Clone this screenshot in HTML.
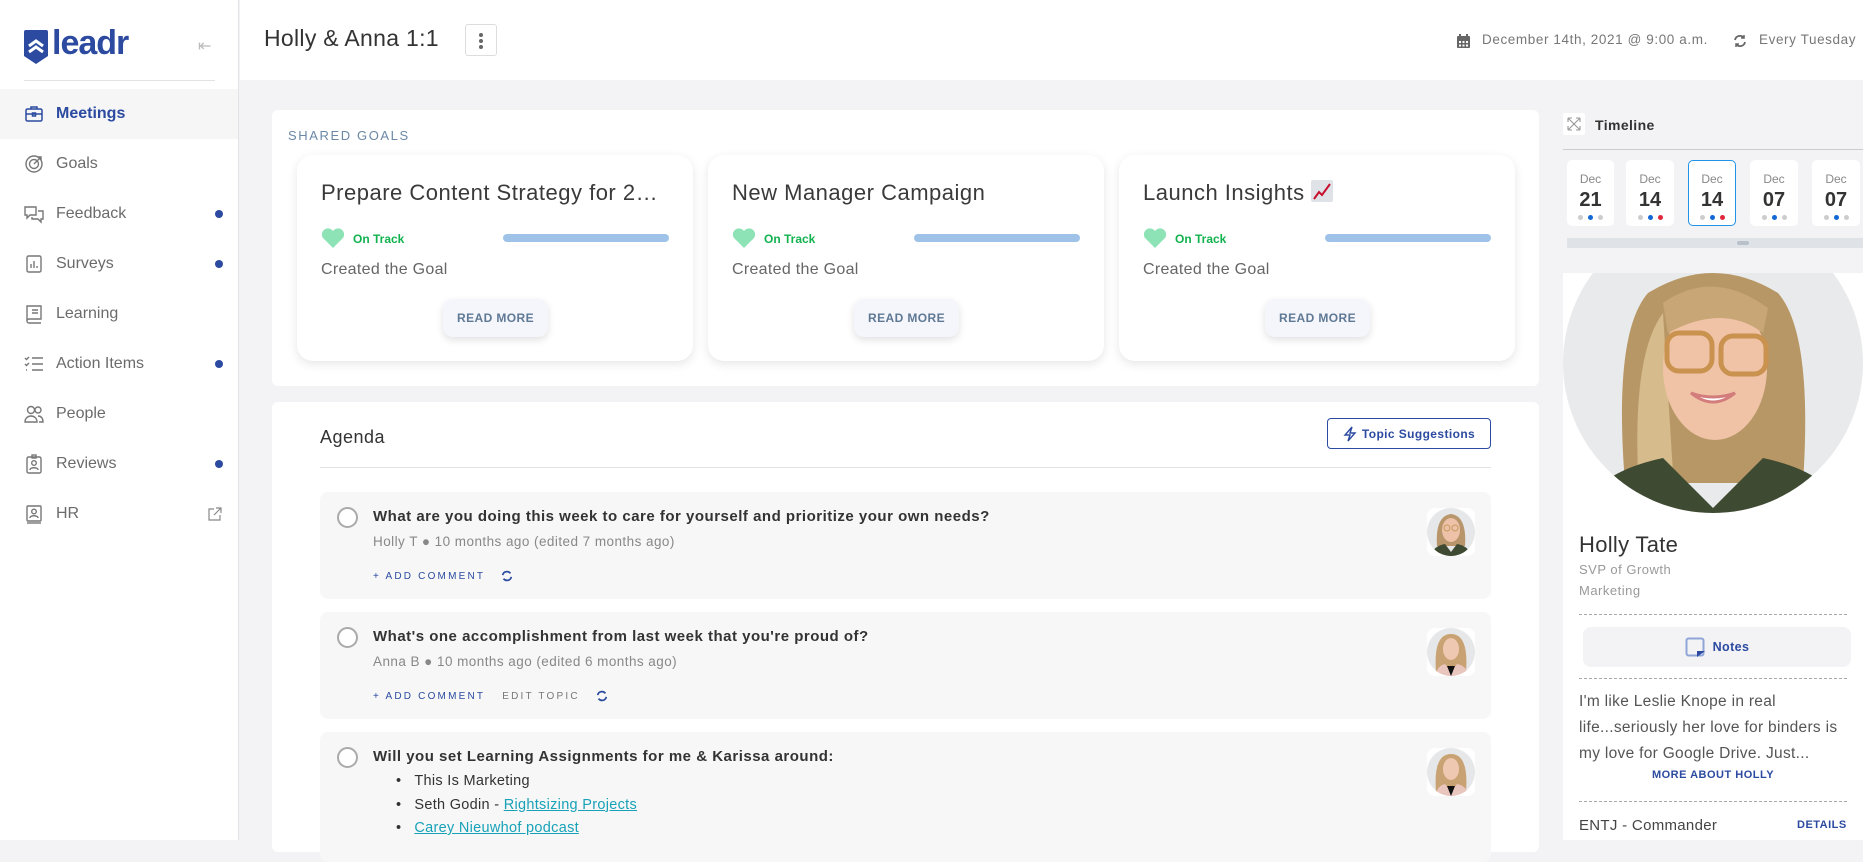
<!DOCTYPE html>
<html><head><meta charset="utf-8">
<style>
*{box-sizing:border-box;margin:0;padding:0}
body{width:1863px;height:840px;overflow:hidden;background:#f3f3f5;font-family:"Liberation Sans",sans-serif;position:relative;color:#333}
.a{position:absolute}
.side{left:0;top:0;width:239px;height:840px;background:#fff;border-right:1px solid #e3e3e6}
.nav{position:absolute;left:0;width:238px;height:50px;display:flex;align-items:center;padding-left:24px;font-size:16px;color:#6b6b6b}
.nav svg{width:20px;height:20px;margin-right:12px;flex:none}
.nav .dot{position:absolute;left:215px;width:8px;height:8px;border-radius:50%;background:#2b4aa0}
.hdr{left:240px;top:0;width:1623px;height:80px;background:#fff}
.panel{background:#fff;border-radius:6px}
.gc{position:absolute;top:155px;width:396px;height:206px;background:#fff;border-radius:16px;box-shadow:0 3px 10px rgba(0,0,0,.10)}
.gc .t{position:absolute;left:24px;top:25px;width:340px;font-size:22px;color:#3a3a3a;white-space:nowrap;overflow:hidden;text-overflow:ellipsis;letter-spacing:.5px}
.gc .h{position:absolute;left:24px;top:73px}
.gc .ot{position:absolute;left:56px;top:77px;font-size:12px;font-weight:bold;color:#12b24f}
.gc .bar{position:absolute;left:206px;top:79px;width:166px;height:8px;border-radius:4px;background:#9fc3e8}
.gc .cr{position:absolute;left:24px;top:106px;font-size:16px;color:#666;letter-spacing:.3px}
.gc .rm{position:absolute;left:146px;top:144px;width:105px;height:38px;border-radius:10px;background:#f5f6fb;box-shadow:0 3px 8px rgba(0,0,0,.12);font-size:12px;font-weight:bold;color:#5f7995;text-align:center;line-height:38px;letter-spacing:.4px}
.it{position:absolute;left:320px;width:1171px;background:#f7f7f7;border-radius:8px}
.it .c{position:absolute;left:17px;top:15px;width:21px;height:21px;border-radius:50%;border:2px solid #aaa;background:#fff}
.it .q{position:absolute;left:53px;top:16px;font-size:15px;font-weight:bold;color:#333;letter-spacing:.5px}
.it .m{position:absolute;left:53px;top:42px;font-size:13.5px;color:#888;letter-spacing:.45px}
.it .ac{position:absolute;left:53px;top:78px;font-size:10px;color:#2b4aa0;letter-spacing:2.2px;display:flex;align-items:center}
.it .av{position:absolute;left:1107px;top:16px;width:48px;height:48px;border-radius:8px;background:#fff;overflow:hidden}
.tc{position:absolute;top:160px;width:48px;height:66px;background:#fff;border-radius:5px;text-align:center}
.tc .mo{font-size:12px;color:#888;margin-top:12px}
.tc .d{font-size:20px;color:#333;margin-top:3px;font-weight:bold}
.tc .dots{margin-top:3px;display:flex;justify-content:center;gap:5px}
.tc .dots i{width:5px;height:5px;border-radius:50%;background:#ccc}
.dash{position:absolute;left:1579px;width:268px;border-top:1px dashed #aaa}
</style></head><body>

<div class="a side">
  <svg class="a" style="left:24px;top:30px" width="24" height="34" viewBox="0 0 24 34"><path d="M0 2Q0 0 2 0H22Q24 0 24 2V26L12 34L0 26Z" fill="#2b4aa0"/><path d="M5 16L12 11L19 16M5 22L12 17L19 22" stroke="#fff" stroke-width="3" fill="none"/></svg>
  <div class="a" style="left:52px;top:24px;font-size:34px;font-weight:bold;color:#2b4aa0;letter-spacing:-1px">leadr</div>
  <div class="a" style="left:198px;top:36px;font-size:16px;color:#bbb">&#8676;</div>
  <div class="a" style="left:24px;top:80px;width:191px;border-top:1px solid #e3e3e3"></div>

  <div class="nav" style="top:89px;background:#f6f6f7;color:#2b4aa0;font-weight:bold"><svg viewBox="0 0 20 20" fill="none" stroke="#2b4aa0" stroke-width="1.5"><rect x="2" y="5" width="16" height="12" rx="1.5"/><path d="M7 5V3h6v2M2 10h16"/><rect x="8.5" y="9" width="3" height="3"/></svg>Meetings</div>
  <div class="nav" style="top:139px"><svg viewBox="0 0 20 20" fill="none" stroke="#777" stroke-width="1.4"><circle cx="10" cy="10" r="8"/><circle cx="10" cy="10" r="4.5"/><path d="M10 10L17 3M14 3h3v3"/></svg>Goals</div>
  <div class="nav" style="top:189px"><svg viewBox="0 0 20 20" fill="none" stroke="#777" stroke-width="1.4"><path d="M1 3h11v8H6l-3 3v-3H1z"/><path d="M14 7h5v8h-2v3l-3-3H8v-2"/></svg>Feedback<span class="dot"></span></div>
  <div class="nav" style="top:239px"><svg viewBox="0 0 20 20" fill="none" stroke="#777" stroke-width="1.4"><rect x="3" y="2" width="14" height="16" rx="1.5"/><path d="M7 14V10M10 14V7M13 14v-2"/></svg>Surveys<span class="dot"></span></div>
  <div class="nav" style="top:289px"><svg viewBox="0 0 20 20" fill="none" stroke="#777" stroke-width="1.4"><path d="M3 17V2h14v13H5a2 2 0 000 4h12"/><path d="M8 6h6M8 9h6"/></svg>Learning</div>
  <div class="nav" style="top:339px"><svg viewBox="0 0 20 20" fill="none" stroke="#777" stroke-width="1.4"><path d="M1 4l1.5 1.5L5 3M1 10l1.5 1.5L5 9M2 16h1M8 4h11M8 10h11M8 16h11"/></svg>Action Items<span class="dot"></span></div>
  <div class="nav" style="top:389px"><svg viewBox="0 0 20 20" fill="none" stroke="#777" stroke-width="1.4"><circle cx="7" cy="6" r="3.5"/><circle cx="14" cy="6" r="3"/><path d="M1 18c0-4 3-6 6-6s6 2 6 6zM14 12c3 0 5 2 5 6h-4"/></svg>People</div>
  <div class="nav" style="top:439px"><svg viewBox="0 0 20 20" fill="none" stroke="#777" stroke-width="1.4"><rect x="3" y="3" width="14" height="16" rx="1.5"/><rect x="8" y="1" width="4" height="3"/><circle cx="10" cy="9" r="2.3"/><path d="M6 16c0-3 8-3 8 0"/></svg>Reviews<span class="dot"></span></div>
  <div class="nav" style="top:489px"><svg viewBox="0 0 20 20" fill="none" stroke="#777" stroke-width="1.4"><rect x="3" y="2" width="14" height="15" rx="1"/><path d="M3 19h14"/><circle cx="10" cy="7.5" r="2.3"/><path d="M6 14c0-3 8-3 8 0"/></svg>HR<svg style="position:absolute;left:207px;width:16px;height:16px" viewBox="0 0 16 16" fill="none" stroke="#888" stroke-width="1.2"><path d="M7 3H2v11h11V9M9 2h5v5M14 2L7 9"/></svg></div>
</div>

<div class="a hdr"></div>
<div class="a" style="left:264px;top:25px;font-size:23px;color:#333;letter-spacing:.3px">Holly &amp; Anna 1:1</div>
<div class="a" style="left:465px;top:24px;width:32px;height:32px;border:1px solid #ddd;border-radius:3px;background:#fff"><div style="position:absolute;left:13px;top:8px;width:4px;height:4px;border-radius:50%;background:#666;box-shadow:0 6px 0 #666,0 12px 0 #666"></div></div>
<svg class="a" style="left:1457px;top:34px" width="13" height="14" viewBox="0 0 13 14"><rect x="0" y="2" width="13" height="12" rx="1" fill="#666"/><rect x="2" y="0" width="2" height="3" fill="#666"/><rect x="9" y="0" width="2" height="3" fill="#666"/><g fill="#fff"><rect x="2" y="7" width="2" height="2"/><rect x="5.5" y="7" width="2" height="2"/><rect x="9" y="7" width="2" height="2"/><rect x="2" y="10.5" width="2" height="2"/><rect x="5.5" y="10.5" width="2" height="2"/><rect x="9" y="10.5" width="2" height="2"/></g></svg>
<div class="a" style="left:1482px;top:32px;font-size:13.5px;color:#777;letter-spacing:.6px">December 14th, 2021 @ 9:00 a.m.</div>
<svg class="a" style="left:1733px;top:34px" width="14" height="14" viewBox="0 0 14 14" fill="none" stroke="#666" stroke-width="1.8"><path d="M2 6a5 5 0 019-2M12 8a5 5 0 01-9 2"/><path d="M11 1v3H8M3 13v-3h3" stroke-width="1.5"/></svg>
<div class="a" style="left:1759px;top:32px;font-size:13.5px;color:#777;letter-spacing:.6px">Every Tuesday</div>

<!-- shared goals -->
<div class="a panel" style="left:272px;top:110px;width:1267px;height:276px"></div>
<div class="a" style="left:288px;top:128px;font-size:13px;color:#6b88a6;letter-spacing:1.6px">SHARED GOALS</div>

<div class="gc" style="left:297px"><div class="t">Prepare Content Strategy for 2022 Launch</div>
<svg class="h" width="24" height="20" viewBox="0 0 24 20"><path d="M12 20L2 10A6 6 0 0112 3A6 6 0 0122 10Z" fill="#8de3b6"/></svg>
<div class="ot">On Track</div><div class="bar"></div><div class="cr">Created the Goal</div><div class="rm">READ MORE</div></div>
<div class="gc" style="left:708px"><div class="t">New Manager Campaign</div>
<svg class="h" width="24" height="20" viewBox="0 0 24 20"><path d="M12 20L2 10A6 6 0 0112 3A6 6 0 0122 10Z" fill="#8de3b6"/></svg>
<div class="ot">On Track</div><div class="bar"></div><div class="cr">Created the Goal</div><div class="rm">READ MORE</div></div>
<div class="gc" style="left:1119px"><div class="t">Launch Insights <svg width="22" height="22" viewBox="0 0 22 22" style="vertical-align:-2px"><rect width="22" height="22" rx="2" fill="#dfe3e8"/><path d="M3 19L8 12L11 15L19 4" stroke="#c8102e" stroke-width="2" fill="none"/></svg></div>
<svg class="h" width="24" height="20" viewBox="0 0 24 20"><path d="M12 20L2 10A6 6 0 0112 3A6 6 0 0122 10Z" fill="#8de3b6"/></svg>
<div class="ot">On Track</div><div class="bar"></div><div class="cr">Created the Goal</div><div class="rm">READ MORE</div></div>

<!-- agenda -->
<div class="a panel" style="left:272px;top:402px;width:1267px;height:450px"></div>
<div class="a" style="left:320px;top:427px;font-size:18px;color:#333;letter-spacing:.5px">Agenda</div>
<div class="a" style="left:1327px;top:418px;width:164px;height:31px;border:1.5px solid #2b4aa0;border-radius:4px;font-size:12px;font-weight:bold;color:#2b4aa0;display:flex;align-items:center;justify-content:center;letter-spacing:.4px"><svg width="14" height="16" viewBox="0 0 14 16" fill="none" stroke="#2b4aa0" stroke-width="1.4" style="margin-right:5px"><path d="M9 1L2 9h5l-2 6 7-8H7z"/></svg>Topic Suggestions</div>
<div class="a" style="left:320px;top:467px;width:1171px;border-top:1px solid #e3e3e3"></div>

<div class="it" style="top:492px;height:107px"><div class="c"></div>
<div class="q">What are you doing this week to care for yourself and prioritize your own needs?</div>
<div class="m">Holly T &#9679; 10 months ago (edited 7 months ago)</div>
<div class="ac">+ ADD COMMENT<svg style="margin-left:16px" width="12" height="12" viewBox="0 0 14 14" fill="none" stroke="#2b4aa0" stroke-width="2"><path d="M2 6a5 5 0 019-2M12 8a5 5 0 01-9 2"/></svg></div>
<div class="av"><svg width="48" height="48" viewBox="0 0 48 48"><circle cx="24" cy="24" r="24" fill="#e6e7e8"/><clipPath id="c1"><circle cx="24" cy="24" r="24"/></clipPath><g clip-path="url(#c1)"><path d="M10 38Q8 8 24 6Q40 8 38 38Z" fill="#b8956a"/><ellipse cx="24" cy="22" rx="9" ry="12" fill="#edc2a8"/><path d="M4 48Q6 38 18 36L24 44L30 36Q42 38 44 48Z" fill="#3f4a32"/><circle cx="20" cy="20" r="3" fill="none" stroke="#c79a5e"/><circle cx="28" cy="20" r="3" fill="none" stroke="#c79a5e"/></g></svg></div></div>

<div class="it" style="top:612px;height:107px"><div class="c"></div>
<div class="q">What's one accomplishment from last week that you're proud of?</div>
<div class="m">Anna B &#9679; 10 months ago (edited 6 months ago)</div>
<div class="ac">+ ADD COMMENT<span style="margin-left:17px;color:#777">EDIT TOPIC</span><svg style="margin-left:16px" width="12" height="12" viewBox="0 0 14 14" fill="none" stroke="#2b4aa0" stroke-width="2"><path d="M2 6a5 5 0 019-2M12 8a5 5 0 01-9 2"/></svg></div>
<div class="av"><svg width="48" height="48" viewBox="0 0 48 48"><circle cx="24" cy="24" r="24" fill="#e6e7e8"/><clipPath id="c2"><circle cx="24" cy="24" r="24"/></clipPath><g clip-path="url(#c2)"><path d="M9 44Q6 6 24 6Q42 6 39 44Z" fill="#c9a273"/><ellipse cx="24" cy="21" rx="8" ry="11" fill="#efc8b2"/><path d="M8 48Q10 38 18 36L24 44L30 36Q40 38 42 48Z" fill="#e9c6bd"/><path d="M20 38L24 48L28 38Z" fill="#111"/></g></svg></div></div>

<div class="it" style="top:732px;height:130px"><div class="c"></div>
<div class="q">Will you set Learning Assignments for me &amp; Karissa around:</div>
<div class="a" style="left:76px;top:38px;font-size:14.5px;line-height:23.5px;color:#333;letter-spacing:.3px">
<div>&#8226;&nbsp;&nbsp;&nbsp;This Is Marketing</div>
<div>&#8226;&nbsp;&nbsp;&nbsp;Seth Godin - <u style="color:#17a2b8">Rightsizing Projects</u></div>
<div>&#8226;&nbsp;&nbsp;&nbsp;<u style="color:#17a2b8">Carey Nieuwhof podcast</u></div></div>
<div class="av"><svg width="48" height="48" viewBox="0 0 48 48"><circle cx="24" cy="24" r="24" fill="#e6e7e8"/><clipPath id="c3"><circle cx="24" cy="24" r="24"/></clipPath><g clip-path="url(#c3)"><path d="M9 44Q6 6 24 6Q42 6 39 44Z" fill="#c9a273"/><ellipse cx="24" cy="21" rx="8" ry="11" fill="#efc8b2"/><path d="M8 48Q10 38 18 36L24 44L30 36Q40 38 42 48Z" fill="#e9c6bd"/><path d="M20 38L24 48L28 38Z" fill="#111"/></g></svg></div></div>

<!-- timeline -->
<div class="a" style="left:1563px;top:113px;width:22px;height:22px;background:#fff;border-radius:2px"><svg width="22" height="22" viewBox="0 0 22 22" fill="none" stroke="#999" stroke-width="1.1"><path d="M5 5l12 12M17 5L5 17M5 5h4M5 5v4M17 5h-4M17 5v4M5 17h4M5 17v-4M17 17h-4M17 17v-4"/></svg></div>
<div class="a" style="left:1595px;top:117px;font-size:14px;color:#333;font-weight:bold;letter-spacing:.4px">Timeline</div>
<div class="a" style="left:1563px;top:149px;width:300px;border-top:1px solid #ccc"></div>
<div class="tc" style="left:1567px;width:47px"><div class="mo">Dec</div><div class="d">21</div><div class="dots"><i></i><i style="background:#1167d6"></i><i></i></div></div>
<div class="tc" style="left:1626px"><div class="mo">Dec</div><div class="d">14</div><div class="dots"><i></i><i style="background:#1167d6"></i><i style="background:#e0283a"></i></div></div>
<div class="tc" style="left:1688px;border:1.5px solid #2193e6"><div class="mo" style="margin-top:11px">Dec</div><div class="d">14</div><div class="dots"><i></i><i style="background:#1167d6"></i><i style="background:#e0283a"></i></div></div>
<div class="tc" style="left:1750px"><div class="mo">Dec</div><div class="d">07</div><div class="dots"><i></i><i style="background:#1167d6"></i><i></i></div></div>
<div class="tc" style="left:1812px"><div class="mo">Dec</div><div class="d">07</div><div class="dots"><i></i><i style="background:#1167d6"></i><i></i></div></div>
<div class="a" style="left:1567px;top:238px;width:296px;height:10px;background:#dfe3e8"><div style="position:absolute;left:170px;top:3px;width:12px;height:4px;border-radius:2px;background:#b8c0ca"></div></div>

<!-- profile -->
<div class="a" style="left:1563px;top:273px;width:300px;height:567px;background:#fff"></div>
<svg class="a" style="left:1563px;top:273px" width="300" height="240" viewBox="0 0 300 240">
<clipPath id="pc"><circle cx="150" cy="90" r="150"/></clipPath>
<g clip-path="url(#pc)"><rect width="300" height="240" fill="#e9eaeb"/>
<path d="M62 210Q50 60 85 20Q150 -20 215 20Q250 60 240 210Z" fill="#b89766"/>
<path d="M75 200Q70 80 100 40L110 200Z" fill="#d6bb8c"/>
<ellipse cx="152" cy="95" rx="52" ry="72" fill="#f0c3a6"/>
<path d="M100 30Q150 -5 205 35L200 60Q160 30 105 60Z" fill="#c8a676"/>
<rect x="104" y="60" width="45" height="38" rx="12" fill="none" stroke="#c9924e" stroke-width="5"/>
<rect x="158" y="63" width="45" height="38" rx="12" fill="none" stroke="#c9924e" stroke-width="5"/>
<path d="M128 120Q150 138 172 120Q150 128 128 120Z" fill="#fff" stroke="#d37c7c" stroke-width="3"/>
<path d="M20 240Q30 200 100 185L150 235L200 185Q270 200 280 240Z" fill="#3f4a32"/>
</g></svg>
<div class="a" style="left:1579px;top:532px;font-size:22px;color:#333;letter-spacing:.3px">Holly Tate</div>
<div class="a" style="left:1579px;top:562px;font-size:13px;color:#999;letter-spacing:.5px">SVP of Growth</div>
<div class="a" style="left:1579px;top:583px;font-size:13px;color:#999;letter-spacing:.5px">Marketing</div>
<div class="dash" style="top:614px"></div>
<div class="a" style="left:1583px;top:627px;width:268px;height:40px;border-radius:8px;background:#f3f3f5;display:flex;align-items:center;justify-content:center;font-size:12.5px;font-weight:bold;color:#2b4aa0;letter-spacing:.4px"><svg width="20" height="20" viewBox="0 0 20 20" style="margin-right:8px"><rect x="1.5" y="1.5" width="17" height="17" rx="2" fill="none" stroke="#8fa5d8" stroke-width="2"/><path d="M12 20V14h8z" fill="#2b4aa0"/></svg>Notes</div>
<div class="dash" style="top:678px"></div>
<div class="a" style="left:1579px;top:689px;width:275px;font-size:15.5px;line-height:26px;color:#555;letter-spacing:.3px">I'm like Leslie Knope in real life...seriously her love for binders is my love for Google Drive. Just...</div>
<div class="a" style="left:1563px;top:769px;width:300px;text-align:center;font-size:11px;font-weight:bold;color:#2b4aa0;letter-spacing:.5px">MORE ABOUT HOLLY</div>
<div class="dash" style="top:801px"></div>
<div class="a" style="left:1579px;top:817px;font-size:15px;color:#444;letter-spacing:.3px">ENTJ - Commander</div>
<div class="a" style="left:1797px;top:819px;font-size:11px;font-weight:bold;color:#2b4aa0;letter-spacing:.5px">DETAILS</div>
</body></html>
